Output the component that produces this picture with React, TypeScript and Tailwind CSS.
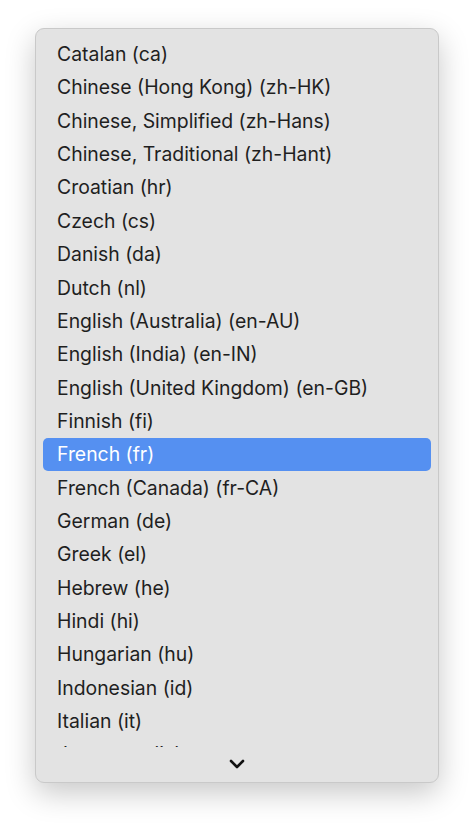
const languages = [
  "Catalan (ca)",
  "Chinese (Hong Kong) (zh-HK)",
  "Chinese, Simplified (zh-Hans)",
  "Chinese, Traditional (zh-Hant)",
  "Croatian (hr)",
  "Czech (cs)",
  "Danish (da)",
  "Dutch (nl)",
  "English (Australia) (en-AU)",
  "English (India) (en-IN)",
  "English (United Kingdom) (en-GB)",
  "Finnish (fi)",
  "French (fr)",
  "French (Canada) (fr-CA)",
  "German (de)",
  "Greek (el)",
  "Hebrew (he)",
  "Hindi (hi)",
  "Hungarian (hu)",
  "Indonesian (id)",
  "Italian (it)",
  "Japanese (ja)",
];

const selected = "French (fr)";

export default function App() {
  return (
    <div className="min-h-[823px] w-[474px] bg-white pt-[28px] pl-[35px] font-['Inter','Liberation_Sans',sans-serif]">
      <div className="w-[404px] overflow-hidden rounded-[9px] border border-[#c9c9c9] bg-[#e3e3e3] shadow-[0_10px_30px_rgba(0,0,0,0.22)]">
        <ul className="h-[718px] overflow-hidden px-[7px] pt-[9px]">
          {languages.map((l) => (
            <li
              key={l}
              className={
                l === selected
                  ? "flex h-[33.35px] items-center rounded-[5px] bg-[#5590f1] px-[14px] text-[19.4px] text-white"
                  : "flex h-[33.35px] items-center px-[14px] text-[19.4px] text-[#1f1f1f]"
              }
            >
              {l}
            </li>
          ))}
        </ul>
        <div className="flex h-[35px] items-center justify-center pb-[2px]">
          <svg width="16" height="10" viewBox="0 0 16 10" fill="none">
            <path d="M2 2 L8 8 L14 2" stroke="#111" strokeWidth="2.6" strokeLinecap="round" strokeLinejoin="round" />
          </svg>
        </div>
      </div>
    </div>
  );
}
